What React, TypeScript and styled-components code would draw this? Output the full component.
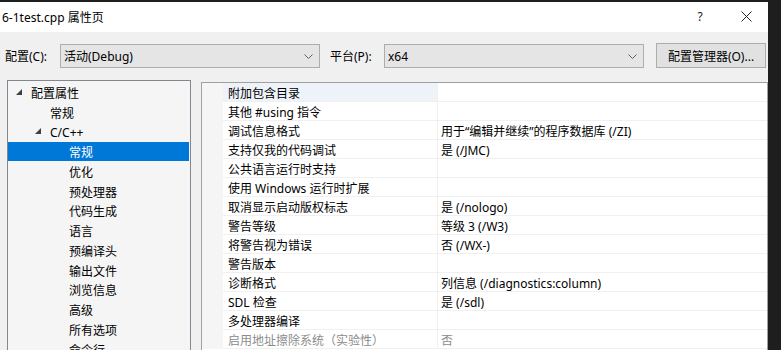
import styled, { createGlobalStyle } from "styled-components";

const GlobalStyle = createGlobalStyle`
  html, body {
    margin: 0;
    padding: 0;
    background: #1e1e1e;
  }
  * {
    box-sizing: border-box;
  }
`;

const font = `"Noto Sans", "Noto Sans CJK SC", sans-serif`;

interface TreeItem {
  label: string;
  level: number;
  expanded?: boolean;
  selected?: boolean;
}

const treeItems: TreeItem[] = [
  { label: "配置属性", level: 0, expanded: true },
  { label: "常规", level: 1 },
  { label: "C/C++", level: 1, expanded: true },
  { label: "常规", level: 2, selected: true },
  { label: "优化", level: 2 },
  { label: "预处理器", level: 2 },
  { label: "代码生成", level: 2 },
  { label: "语言", level: 2 },
  { label: "预编译头", level: 2 },
  { label: "输出文件", level: 2 },
  { label: "浏览信息", level: 2 },
  { label: "高级", level: 2 },
  { label: "所有选项", level: 2 },
  { label: "命令行", level: 2 },
];

interface Prop {
  name: string;
  value?: string;
  disabled?: boolean;
}

const props: Prop[] = [
  { name: "附加包含目录" },
  { name: "其他 #using 指令" },
  { name: "调试信息格式", value: "用于“编辑并继续”的程序数据库 (/ZI)" },
  { name: "支持仅我的代码调试", value: "是 (/JMC)" },
  { name: "公共语言运行时支持" },
  { name: "使用 Windows 运行时扩展" },
  { name: "取消显示启动版权标志", value: "是 (/nologo)" },
  { name: "警告等级", value: "等级 3 (/W3)" },
  { name: "将警告视为错误", value: "否 (/WX-)" },
  { name: "警告版本" },
  { name: "诊断格式", value: "列信息 (/diagnostics:column)" },
  { name: "SDL 检查", value: "是 (/sdl)" },
  { name: "多处理器编译" },
  { name: "启用地址擦除系统（实验性）", value: "否", disabled: true },
];

const Chevron = () => (
  <svg width="9" height="5" viewBox="0 0 9 5">
    <polyline points="0.5,0.5 4.5,4.5 8.5,0.5" fill="none" stroke="#606060" strokeWidth="1" />
  </svg>
);

const CloseIcon = () => (
  <svg width="11" height="11" viewBox="0 0 11 11">
    <line x1="0.5" y1="0.5" x2="10.5" y2="10.5" stroke="#222" strokeWidth="1" />
    <line x1="10.5" y1="0.5" x2="0.5" y2="10.5" stroke="#222" strokeWidth="1" />
  </svg>
);

const Expander = () => (
  <svg width="6" height="6" viewBox="0 0 6 6">
    <polygon points="6,0 6,6 0,6" fill="#404040" />
  </svg>
);

export default function App() {
  return (
    <>
      <GlobalStyle />
      <Screen>
        <Window>
          <TitleBar>
            <Title>6-1test.cpp 属性页</Title>
            <TitleButtons>
              <Help>?</Help>
              <CloseButton>
                <CloseIcon />
              </CloseButton>
            </TitleButtons>
          </TitleBar>
          <Body>
            <Toolbar>
              <FieldLabel $width={55}>配置(C):</FieldLabel>
              <Combo>
                <span>活动(Debug)</span>
                <Chevron />
              </Combo>
              <FieldLabel $width={54} $gap={10}>平台(P):</FieldLabel>
              <Combo>
                <span>x64</span>
                <Chevron />
              </Combo>
              <Button>配置管理器(O)...</Button>
            </Toolbar>
            <Panels>
              <Tree>
                {treeItems.map((item, i) => (
                  <TreeRow key={i} $level={item.level} $selected={!!item.selected}>
                    <ExpanderSlot>{item.expanded && <Expander />}</ExpanderSlot>
                    {item.label}
                  </TreeRow>
                ))}
              </Tree>
              <Grid>
                {props.map((p, i) => (
                  <GridRow key={i}>
                    <Margin />
                    <NameCell $active={i === 0} $disabled={!!p.disabled}>
                      {p.name}
                    </NameCell>
                    <ValueCell $disabled={!!p.disabled}>{p.value}</ValueCell>
                  </GridRow>
                ))}
              </Grid>
            </Panels>
          </Body>
        </Window>
      </Screen>
    </>
  );
}

const Screen = styled.div`
  display: flex;
  width: 781px;
  height: 350px;
  overflow: hidden;
  background: #1e1e1e;
  font-family: ${font};
  font-size: 12px;
  color: #000;
`;

const Window = styled.div`
  width: 768px;
  margin-top: 2px;
  display: flex;
  flex-direction: column;
  background: #f0f0f0;
  overflow: hidden;
`;

const TitleBar = styled.div`
  height: 30px;
  flex: none;
  background: #fff;
  display: flex;
  align-items: center;
  justify-content: space-between;
  padding-left: 2px;
  padding-bottom: 1px;
`;

const Title = styled.div`
  font-size: 12px;
  color: #000;
`;

const TitleButtons = styled.div`
  display: flex;
  align-items: center;
  height: 100%;
`;

const Help = styled.div`
  width: 46px;
  text-align: center;
  font-size: 12px;
  color: #222;
  padding-left: 2px;
`;

const CloseButton = styled.div`
  width: 46px;
  display: flex;
  justify-content: center;
  align-items: center;
  padding-left: 2px;
`;

const Body = styled.div`
  flex: 1;
  display: flex;
  flex-direction: column;
  padding: 11px 0 0 0;
  min-height: 0;
`;

const Toolbar = styled.div`
  display: flex;
  align-items: center;
  height: 25px;
  padding-left: 5px;
`;

const FieldLabel = styled.div<{ $width: number; $gap?: number }>`
  width: ${(p) => p.$width}px;
  margin-left: ${(p) => p.$gap ?? 0}px;
  white-space: nowrap;
`;

const Combo = styled.div`
  width: 260px;
  height: 24px;
  margin-top: 1px;
  background: #e5e5e5;
  border: 1px solid #adadad;
  display: flex;
  align-items: center;
  justify-content: space-between;
  padding: 0 6px 0 3px;
  white-space: nowrap;
`;

const Button = styled.div`
  width: 110px;
  height: 25px;
  margin-left: 12px;
  background: #e1e1e1;
  border: 1px solid #adadad;
  display: flex;
  align-items: center;
  justify-content: center;
  white-space: nowrap;
`;

const Panels = styled.div`
  display: flex;
  margin-top: 12px;
  padding-left: 7px;
  gap: 10px;
  flex: 1;
  min-height: 0;
`;

const Tree = styled.div`
  width: 184px;
  flex: none;
  background: #f5f5f5;
  border: 1px solid #828790;
  border-bottom: none;
  padding: 1.4px 1px 0 0;
  overflow: hidden;
`;

const TreeRow = styled.div<{ $level: number; $selected: boolean }>`
  height: 19.78px;
  display: flex;
  align-items: center;
  padding-left: ${(p) => 8 + p.$level * 19}px;
  padding-top: 1px;
  background: ${(p) => (p.$selected ? "#0078d7" : "transparent")};
  color: ${(p) => (p.$selected ? "#fff" : "#000")};
  white-space: nowrap;
`;

const ExpanderSlot = styled.span`
  width: 15px;
  flex: none;
  display: flex;
  align-items: center;
  padding-bottom: 2px;
`;

const Grid = styled.div`
  flex: 1;
  margin-top: 2px;
  background: #fff;
  border: 1px solid #a0a0a0;
  border-bottom: none;
  overflow: hidden;
`;

const GridRow = styled.div`
  display: grid;
  grid-template-columns: 21px 215px 1fr;
  height: 19px;
`;

const Margin = styled.div`
  background: #f5f5f5;
`;

const NameCell = styled.div<{ $active: boolean; $disabled: boolean }>`
  display: flex;
  align-items: center;
  padding: 1px 0 0 5px;
  background: ${(p) => (p.$active ? "#eef3fa" : "#fff")};
  color: ${(p) => (p.$disabled ? "#8c8c8c" : "#000")};
  border-bottom: 1px solid #f0f0f0;
  border-right: 1px solid #f0f0f0;
  white-space: nowrap;
  overflow: hidden;
`;

const ValueCell = styled.div<{ $disabled: boolean }>`
  display: flex;
  align-items: center;
  padding: 1px 0 0 3px;
  color: ${(p) => (p.$disabled ? "#8c8c8c" : "#000")};
  border-bottom: 1px solid #f0f0f0;
  white-space: nowrap;
  overflow: hidden;
`;
